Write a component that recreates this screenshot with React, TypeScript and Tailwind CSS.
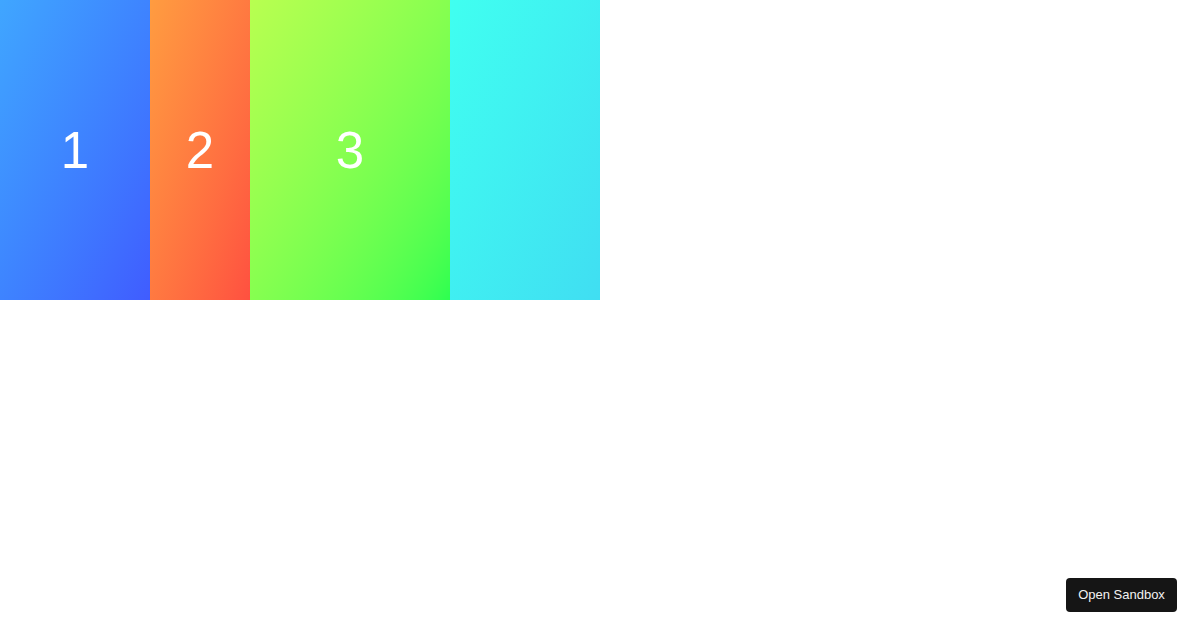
import React from 'react';

const panels = [
  { label: '1', width: 'w-[150px]', bg: 'bg-gradient-to-br from-[#40a6ff] to-[#405cff]' },
  { label: '2', width: 'w-[100px]', bg: 'bg-gradient-to-br from-[#ff9c40] to-[#ff5040]' },
  { label: '3', width: 'w-[200px]', bg: 'bg-gradient-to-br from-[#b8ff50] to-[#2cff50]' },
  { label: '', width: 'w-[150px]', bg: 'bg-gradient-to-br from-[#40fff0] to-[#40def2]' },
];

export default function App() {
  return (
    <div className="relative w-[1200px] h-[630px] bg-white font-['Liberation_Sans',Arial,sans-serif]">
      <div className="flex h-[300px] w-[600px]">
        {panels.map((p, i) => (
          <div
            key={i}
            className={`${p.width} ${p.bg} h-full flex items-center justify-center text-white text-[51px] leading-none`}
          >
            {p.label}
          </div>
        ))}
      </div>

      {/* sandbox button */}
      <button className="absolute right-[23px] bottom-[18px] w-[111px] h-[34px] rounded-[4px] bg-[#151515] text-[#f2f2f2] text-[13px] flex items-center justify-center">
        Open Sandbox
      </button>
    </div>
  );
}
